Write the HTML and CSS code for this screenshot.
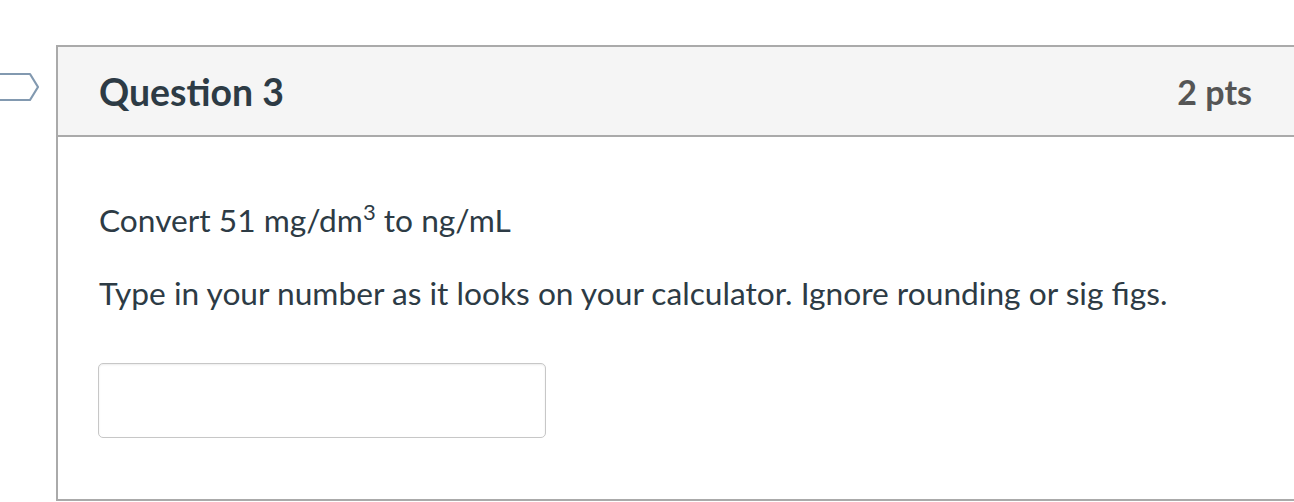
FILE: index.html
```html
<!DOCTYPE html>
<html lang="en">
<head>
  <meta charset="UTF-8" />
  <title>Question 3</title>
  <link rel="stylesheet" href="styles.css">
</head>
<body>
  <div class="quiz">
    <svg class="flag" width="40" height="32" viewBox="0 0 40 32">
      <path d="M-4 2 H30 L38 15 L30 28 H-4 Z" fill="#fff" stroke="#8299b0" stroke-width="2.2" stroke-linejoin="round" />
    </svg>
    <div class="question">
      <div class="header">
        <h2 class="title">Question 3</h2>
        <div class="points">2 pts</div>
      </div>
      <div class="content">
        <p class="prompt">Convert 51 mg/dm<sup>3</sup> to ng/mL</p>
        <p class="prompt">Type in your number as it looks on your calculator. Ignore rounding or sig figs.</p>
        <input class="answer" type="text" />
      </div>
    </div>
  </div>
</body>
</html>
```

FILE: styles.css
```css
html, body {
  margin: 0;
  background: #fff;
  overflow: hidden;
}
body {
  font-family: Lato, "Open Sans", sans-serif;
  color: #2d3b45;
}
.quiz {
  position: relative;
  padding: 45px 0 0 56px;
}
.flag {
  position: absolute;
  left: 0;
  top: 72px;
}
.question {
  width: calc(100% + 2px);
  height: 456px;
  box-sizing: border-box;
  border: 2px solid #aaa;
}
.header {
  display: flex;
  justify-content: space-between;
  align-items: center;
  height: 88px;
  background: #f5f5f5;
  border-bottom: 2px solid #aaa;
  padding: 0 42px 0 41px;
}
.title {
  margin: 0;
  font-size: 37.4px;
  font-weight: 700;
  color: #2d3b45;
}
.points {
  font-size: 34px;
  font-weight: 700;
  color: #555;
}
.content {
  padding: 63px 41px 0;
}
.prompt {
  margin: 0 0 33px;
  font-size: 31.7px;
  line-height: 40px;
}
.prompt sup {
  font-size: 22px;
  line-height: 0;
}
.answer {
  display: block;
  width: 448px;
  height: 75px;
  box-sizing: border-box;
  margin: 50px 0 0 -1px;
  border: 1px solid #c7c7c7;
  border-radius: 5px;
  background: #fff;
  box-shadow: inset 0 1px 2px rgba(0,0,0,0.08);
}
```
